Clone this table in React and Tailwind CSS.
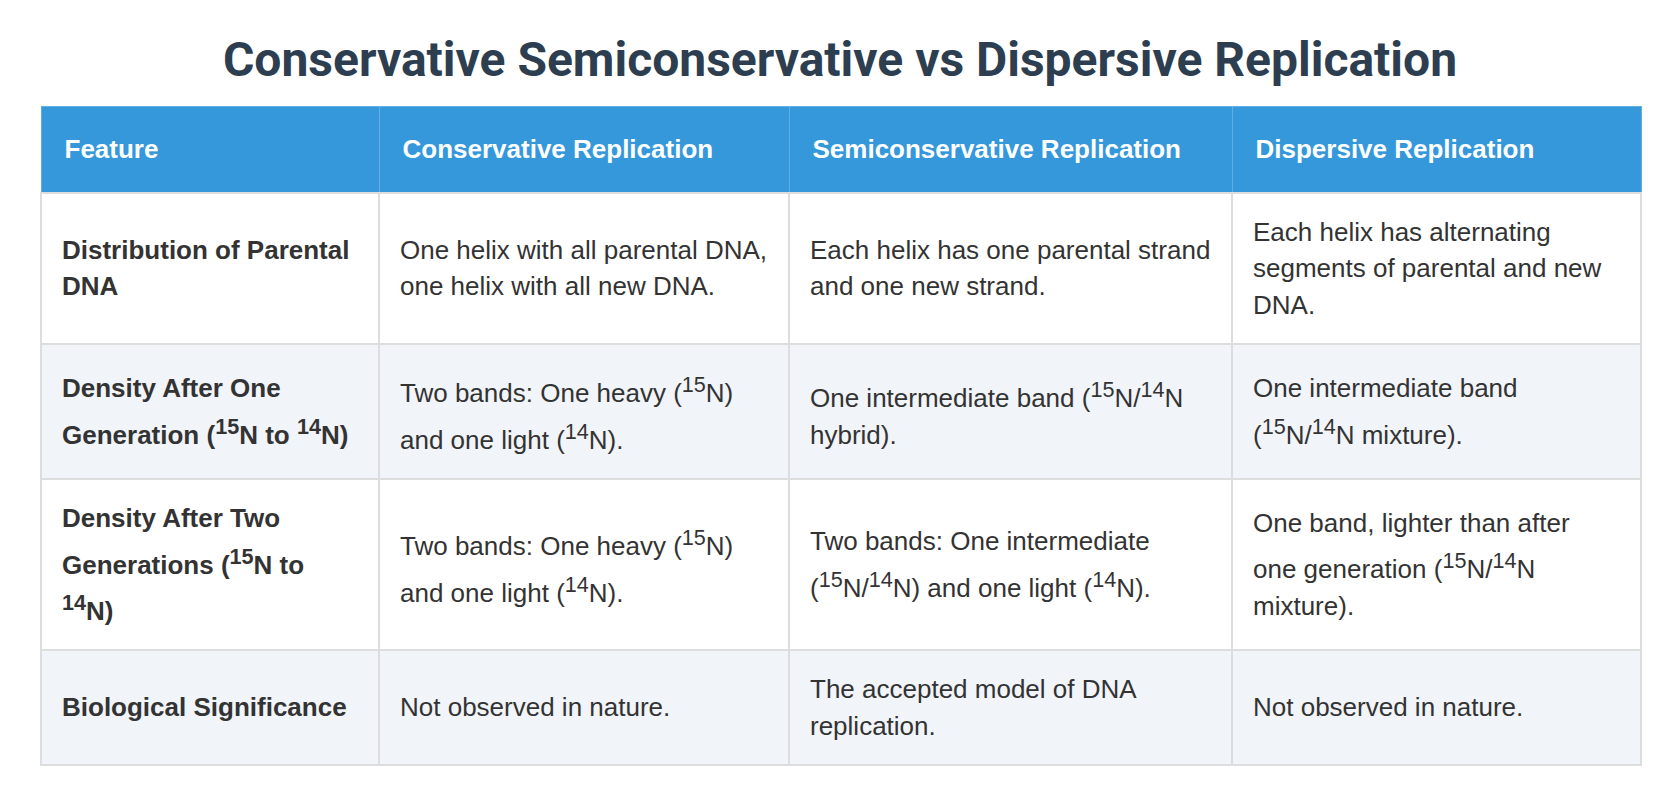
import React from "react";

const S = ({ children }) => (
  <sup className="relative top-0 align-[9.7px] text-[0.83em] leading-[40.3px]">{children}</sup>
);

const rows = [
  {
    f: <>Distribution of Parental DNA</>,
    c: <>One helix with all parental DNA, one helix with all new DNA.</>,
    s: <>Each helix has one parental strand and one new strand.</>,
    d: <>Each helix has alternating segments of parental and new DNA.</>,
  },
  {
    f: (
      <>
        Density After One Generation (<S>15</S>N to <S>14</S>N)
      </>
    ),
    c: (
      <>
        Two bands: One heavy (<S>15</S>N) and one light (<S>14</S>N).
      </>
    ),
    s: (
      <>
        One intermediate band (<S>15</S>N/<S>14</S>N hybrid).
      </>
    ),
    d: (
      <>
        One intermediate band (<S>15</S>N/<S>14</S>N mixture).
      </>
    ),
  },
  {
    f: (
      <>
        Density After Two Generations (<S>15</S>N to <S>14</S>N)
      </>
    ),
    c: (
      <>
        Two bands: One heavy (<S>15</S>N) and one light (<S>14</S>N).
      </>
    ),
    s: (
      <>
        Two bands: One intermediate (<S>15</S>N/<S>14</S>N) and one light (<S>14</S>N).
      </>
    ),
    d: (
      <>
        One band, lighter than after one generation (<S>15</S>N/<S>14</S>N mixture).
      </>
    ),
  },
  {
    f: <>Biological Significance</>,
    c: <>Not observed in nature.</>,
    s: <>The accepted model of DNA replication.</>,
    d: <>Not observed in nature.</>,
  },
];

export default function App() {
  return (
    <div className="min-h-[808px] w-full bg-white pt-[32px] font-['Liberation_Sans',Arial,sans-serif] text-[#333333]">
      <h1 className="mb-[18px] text-center font-['Roboto',sans-serif] text-[48px] font-bold leading-[56px] text-[#2c3e50]">
        Conservative Semiconservative vs Dispersive Replication
      </h1>
      <div className="px-[40px]">
        <table className="w-[1600px] table-fixed border-collapse text-[26px] leading-[36.6px]">
          <colgroup>
            <col className="w-[338px]" />
            <col className="w-[410px]" />
            <col className="w-[443px]" />
            <col className="w-[409px]" />
          </colgroup>
          <thead>
            <tr className="bg-[#3498db] text-white">
              {["Feature", "Conservative Replication", "Semiconservative Replication", "Dispersive Replication"].map(
                (h) => (
                  <th
                    key={h}
                    className="border border-[#62aee3] px-[23px] py-[24px] text-left align-middle font-bold"
                  >
                    {h}
                  </th>
                )
              )}
            </tr>
          </thead>
          <tbody>
            {rows.map((r, i) => (
              <tr key={i} className={i % 2 === 1 ? "bg-[#f1f4f9]" : "bg-white"}>
                <td className="border-2 border-[#dddddd] px-[20px] py-[20px] align-middle font-bold">{r.f}</td>
                <td className="border-2 border-[#dddddd] px-[20px] py-[20px] align-middle">{r.c}</td>
                <td className="border-2 border-[#dddddd] px-[20px] py-[20px] align-middle">{r.s}</td>
                <td className="border-2 border-[#dddddd] px-[20px] py-[20px] align-middle">{r.d}</td>
              </tr>
            ))}
          </tbody>
        </table>
      </div>
    </div>
  );
}
